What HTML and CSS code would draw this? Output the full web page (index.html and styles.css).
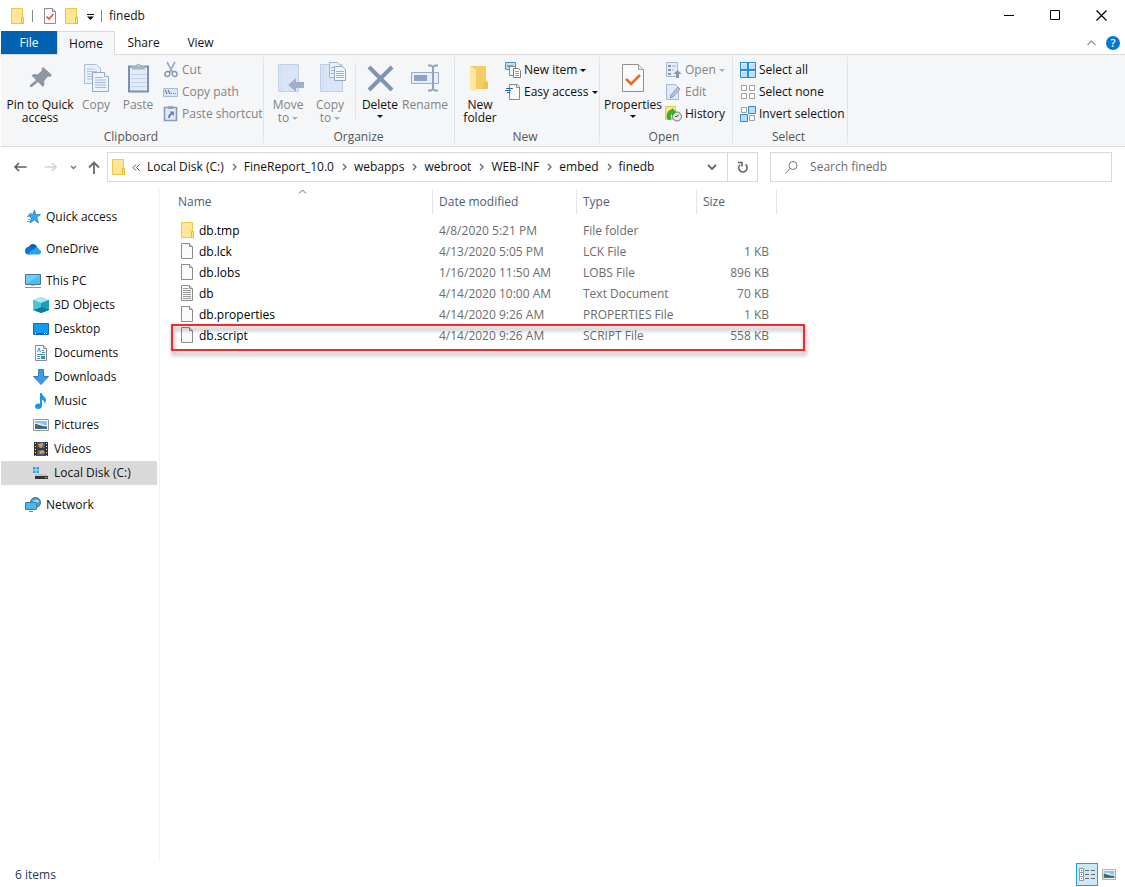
FILE: index.html
```
<!DOCTYPE html>
<html lang="en">
<head>
    <meta charset="UTF-8">
    <meta name="viewport" content="width=device-width, initial-scale=1.0">
    <title>finedb</title>
    <link rel="stylesheet" href="styles.css">
</head>
<body>
    <!-- shared icons -->
    <svg class="sprite" aria-hidden="true">
        <symbol id="i-folder" viewBox="0 0 16 16">
            <path d="M1.5.5h11v9h1v6h-12z" fill="#ffe694" stroke="#efc84a"/>
            <path d="M11.500 15V9.500h2v6h-2z" fill="#ffe694" stroke="#e6b92f"/>
        </symbol>
        <symbol id="i-file" viewBox="0 0 16 16">
            <path d="M2.500.5h8l3 3v12h-11z" fill="#f9fafb" stroke="#8c8c8c"/>
            <path d="M10.500.5v3h3" fill="#e4e4e4" stroke="#8c8c8c"/>
        </symbol>
        <symbol id="i-drop" viewBox="0 0 6 3">
            <path d="M0 0h6L3 3z" fill="currentColor"/>
        </symbol>
        <symbol id="i-next" viewBox="0 0 5 8">
            <path d="M1 1l3 3-3 3" fill="none" stroke="#666" stroke-width="1.300"/>
        </symbol>
        <symbol id="i-picture" viewBox="0 0 16 12">
            <path d="M.5.5h15v11H.5z" fill="#fff" stroke="#969696"/>
            <path d="M2 2h12v8H2z" fill="#8fc3ee"/>
            <path d="M2 4h5l4 2h3v2H2z" fill="#e3eff8"/>
            <path d="M2 5c3 0 5 2 12 2.500V9H2z" fill="#3f6b62"/>
            <path d="M2 9h12v1H2z" fill="#3d6f9e"/>
        </symbol>
    </svg>

    <div class="window">
        <header class="titlebar">
            <svg class="icon" viewBox="0 0 16 16"><use href="#i-folder"/></svg>
            <span class="bar"></span>
            <button class="quick" aria-label="Properties">
                <svg class="icon" viewBox="0 0 16 16"><use href="#i-file"/><path d="M4.500 8.500l2.500 2.500 4.500-5" fill="none" stroke="#e8541c" stroke-width="1.600"/></svg>
            </button>
            <button class="quick" aria-label="New folder">
                <svg class="icon" viewBox="0 0 16 16"><use href="#i-folder"/></svg>
            </button>
            <button class="quick customize" aria-label="Customize Quick Access Toolbar">
                <svg width="7" height="6" viewBox="0 0 7 6"><path d="M0 0h7v1H0zM0 2.500h7L3.500 6z" fill="#111"/></svg>
            </button>
            <span class="bar"></span>
            <h1>finedb</h1>
            <div class="window-controls">
                <button aria-label="Minimize"><svg width="11" height="11"><path d="M0 5.500h10" stroke="#000"/></svg></button>
                <button aria-label="Maximize"><svg width="11" height="11"><path d="M.5.5h9v9h-9z" fill="none" stroke="#000"/></svg></button>
                <button aria-label="Close"><svg width="11" height="11"><path d="M.5.5l10 10M10.500.5l-10 10" stroke="#000" stroke-width="1.200"/></svg></button>
            </div>
        </header>

        <nav class="tabs">
            <button class="tab file">File</button>
            <button class="tab active">Home</button>
            <button class="tab">Share</button>
            <button class="tab">View</button>
            <div class="tab-tools">
                <button aria-label="Minimize the Ribbon"><svg width="9" height="6"><path d="M.5 5l4-4 4 4" fill="none" stroke="#999" stroke-width="1.300"/></svg></button>
                <button class="help" aria-label="Help">?</button>
            </div>
        </nav>

        <div class="ribbon">
            <section class="group clipboard">
                <div class="tools">
                    <button class="big pin">
                        <svg width="32" height="32" viewBox="0 0 32 32"><path d="M19 4l9 8-2 2-2-.5-4 4.500c1 3 0 5-1 6l-5-5-6 5H6v-2l6-5-4.500-4.500C9 11 11 10.500 13.500 11.500L18 7.500 17.500 6z" fill="#8e979f"/></svg>
                        <span>Pin to Quick<br>access</span>
                    </button>
                    <button class="big" disabled>
                        <svg width="32" height="32" viewBox="0 0 32 32">
                            <path d="M4.500 1.500h12l4 4v15h-16z" fill="#eaf0f9" stroke="#a9bdd8"/><path d="M7 6h8M7 8.500h10M7 11h10M7 13.500h10M7 16h10" stroke="#b1c5e0"/>
                            <path d="M12.500 9.500h12l4 4v15h-16z" fill="#eef3fb" stroke="#92a9c9"/><path d="M24.500 9.500v4h4" fill="#fff" stroke="#92a9c9"/><path d="M15 14.500h8M15 17h11M15 19.500h11M15 22h11M15 24.500h11" stroke="#a3b9d8"/>
                        </svg>
                        <span>Copy</span>
                    </button>
                    <button class="big" disabled>
                        <svg width="32" height="32" viewBox="0 0 32 32">
                            <path d="M7 3.500h19v25H7z" fill="#e2ebf8" stroke="#7b8fb0" stroke-width="2"/>
                            <path d="M9 11.500h15M9 15.500h15M9 19.500h15M9 23.500h15" stroke="#c2d1e6"/>
                            <path d="M10 6.500V3h4c0-3 5-3 5 0h4v3.500z" fill="#a5b1c4"/><path d="M16 2h1v1h-1z" fill="#fff"/>
                        </svg>
                        <span>Paste</span>
                    </button>
                    <div class="stack">
                        <button class="small" disabled>
                            <svg class="icon" viewBox="0 0 16 16"><path d="M4 0l5.500 10M12 0L6.500 10" stroke="#9aaccc" stroke-width="1.700"/><path d="M4.500 9.500c2 0 3 1 2 3.500-1 2-4 2-4.500 0-.5-2 1-3.500 2.500-3.500zM11.500 9.500c-2 0-3 1-2 3.500 1 2 4 2 4.500 0 .5-2-1-3.500-2.500-3.500z" fill="none" stroke="#8095b9" stroke-width="1.500"/></svg>
                            Cut
                        </button>
                        <button class="small" disabled>
                            <svg class="icon" viewBox="0 0 16 16"><path d="M.5 4.500h14v8H.5z" fill="#dce7f6" stroke="#a8bbd6"/><path d="M2 6l2 4M5 6l2 4M8 9.500h1M10 9.500h1M12 9.500h1" stroke="#6c7f9f" stroke-width="1.200"/></svg>
                            Copy path
                        </button>
                        <button class="small" disabled>
                            <svg class="icon" viewBox="0 0 16 16"><path d="M1.500 1.500h12v13h-12z" fill="#e2ebf8" stroke="#869ab9" stroke-width="1.600"/><path d="M5 0h5v3H5z" fill="#93a5c2"/><path d="M5 12c0-3 1-4 3-5L6.500 5.500H11V10L9.500 8.500C8 9 7 10 7 12z" fill="#7084a8"/></svg>
                            Paste shortcut
                        </button>
                    </div>
                </div>
                <h2>Clipboard</h2>
            </section>

            <section class="group organize">
                <div class="tools">
                    <button class="big" disabled>
                        <svg width="32" height="32" viewBox="0 0 32 32"><path d="M6.500 1.500h20v27h-20z" fill="#d9e5f6" stroke="#bfd0e8"/><path d="M9 2v26" stroke="#cbdaee"/><path d="M16 22l8-7v4h8v6h-8v4z" fill="#a0b0cc"/></svg>
                        <span>Move to <svg class="drop"><use href="#i-drop"/></svg></span>
                    </button>
                    <button class="big" disabled>
                        <svg width="32" height="32" viewBox="0 0 32 32"><path d="M6.500 1.500h22v27h-22z" fill="#d9e5f6" stroke="#bfd0e8"/><path d="M9 2v26" stroke="#cbdaee"/><path d="M15.500-.5h8l3 3v12h-11z" fill="#eaf1fb" stroke="#a3b5d0"/><path d="M20.500 3.500h8l3 3v11h-11z" fill="#f1f5fc" stroke="#93a7c6"/><path d="M22 8.500h8M22 10.500h8M22 12.500h8M22 14.500h8M17 4.500h3M17 7.500h3M17 10.500h3" stroke="#9fb2d0"/></svg>
                        <span>Copy to <svg class="drop"><use href="#i-drop"/></svg></span>
                    </button>
                    <span class="divider"></span>
                    <button class="big">
                        <svg width="32" height="32" viewBox="0 0 32 32"><path d="M5 4l23 23M28 4L5 27" stroke="#8193b2" stroke-width="4"/></svg>
                        <span>Delete <svg class="drop block"><use href="#i-drop"/></svg></span>
                    </button>
                    <button class="big rename" disabled>
                        <svg width="32" height="32" viewBox="0 0 32 32"><path d="M2.500 9.500h27v11h-27z" fill="#e6eef9" stroke="#98abc8"/><path d="M5 12h13v6H5z" fill="#8fa3c3"/><path d="M19 2.500h3l2 1.500 2-1.500h3M24 3v24M19 27.500h3l2-1.500 2 1.500h3" fill="none" stroke="#8fa3c1" stroke-width="2"/></svg>
                        <span>Rename</span>
                    </button>
                </div>
                <h2>Organize</h2>
            </section>

            <section class="group new">
                <div class="tools">
                    <button class="big">
                        <svg width="32" height="32" viewBox="0 0 32 32"><path d="M6 3h16v14l2 2v7H6z" fill="#f5cd65"/><path d="M6 3l6 4v19.500l-1.500 2L6 26z" fill="#ffe79f"/><path d="M19 19h5v7h-5z" fill="#efc455"/></svg>
                        <span>New folder</span>
                    </button>
                    <div class="stack">
                        <button class="small">
                            <svg class="icon" viewBox="0 0 16 16"><path d="M.5.500h10v7H.5z" fill="#bfe0f5" stroke="#4c91bb"/><path d="M2 4h6" stroke="#32678c"/><path d="M4.500 4.500h6v9h-6z" fill="#f5f5f5" stroke="#8a8a8a"/><path d="M8.500 6.500h5l2 2v7h-7z" fill="#fff" stroke="#7e7e7e"/><path d="M10 9.500h4M10 11.500h4M10 13.500h4" stroke="#e0877f"/></svg>
                            New item <svg class="drop"><use href="#i-drop"/></svg>
                        </button>
                        <button class="small">
                            <svg class="icon" viewBox="0 0 16 16"><path d="M4.500.5h8l2 2v13h-10z" fill="#fafafa" stroke="#8a8a8a"/><path d="M11.500.5v3h3" fill="none" stroke="#8a8a8a"/><path d="M1 4.500h7M0 6.500h6M2 8.500h3" stroke="#2d6aa0"/></svg>
                            Easy access <svg class="drop"><use href="#i-drop"/></svg>
                        </button>
                    </div>
                </div>
                <h2>New</h2>
            </section>

            <section class="group open">
                <div class="tools">
                    <button class="big">
                        <svg width="32" height="32" viewBox="0 0 32 32"><path d="M5.500 1.500h16l5 5v22h-21z" fill="#fafafa" stroke="#909090"/><path d="M21.500 1.500v5h5" fill="#e6e6e6" stroke="#a0a0a0"/><path d="M9 16l5 5 9-9" fill="none" stroke="#f26522" stroke-width="2.500"/></svg>
                        <span>Properties <svg class="drop block"><use href="#i-drop"/></svg></span>
                    </button>
                    <div class="stack">
                        <button class="small" disabled>
                            <svg class="icon" viewBox="0 0 16 16"><path d="M.5.5h11v14H.5z" fill="#e6edf8" stroke="#a8b8d2"/><path d="M2 3h3v2H2zM2 7h3v2H2zM2 11h3v2H2z" fill="#8197bc"/><path d="M6 4h4M6 8h2" stroke="#9eb0ce"/><path d="M10 16v-4H7.500L11.500 8l4 4H13v4z" fill="#8197bc"/></svg>
                            Open <svg class="drop"><use href="#i-drop"/></svg>
                        </button>
                        <button class="small" disabled>
                            <svg class="icon" viewBox="0 0 16 16"><path d="M.5.5h9l3 3v12H.5z" fill="#dfe8f6" stroke="#a8b8d2"/><path d="M4 14l1-3 7-8 2 2-7 8z" fill="#b5c4dd" stroke="#8a9dbf"/></svg>
                            Edit
                        </button>
                        <button class="small">
                            <svg class="icon" viewBox="0 0 16 16"><path d="M-.5.5h10v13h-10z" fill="#ffe48d" stroke="#efc84a"/><circle cx="11" cy="10.500" r="4.500" fill="#e5e5e5" stroke="#777"/><path d="M10.500 11l2-2.500M9 10.500h2" fill="none" stroke="#555"/><path d="M1 11c0-5 2-7 5-7V2.500l4 3.500-4 3V7.500c-1.500 0-2 2-1 5.500C2.500 14 1 13 1 11z" fill="#2fb52e" stroke="#17871b" stroke-width=".5"/></svg>
                            History
                        </button>
                    </div>
                </div>
                <h2>Open</h2>
            </section>

            <section class="group select">
                <div class="tools">
                    <div class="stack">
                        <button class="small">
                            <svg class="icon" viewBox="0 0 16 16"><path d="M.5.500h15v15H.5z" fill="#b8dffa" stroke="#2b8bd8"/><path d="M8 0v16M0 8h16" stroke="#2b8bd8" stroke-width="2"/><path d="M1.500 6.500v-5h5M9.500 6.500v-5h5M1.500 14.500v-5h5M9.500 14.500v-5h5" fill="none" stroke="#e3f3fe"/></svg>
                            Select all
                        </button>
                        <button class="small">
                            <svg class="icon" viewBox="0 0 16 16"><path d="M1.500 1.500h5v5h-5zM9.500 1.500h5v5h-5zM1.500 9.500h5v5h-5zM9.500 9.500h5v5h-5z" fill="#fff" stroke="#a0a0a0"/></svg>
                            Select none
                        </button>
                        <button class="small">
                            <svg class="icon" viewBox="0 0 16 16"><path d="M1.500 1.500h5v5h-5zM9.500 9.500h5v5h-5z" fill="#fff" stroke="#a0a0a0"/><path d="M8.500.5h7v7h-7zM.5 8.500h7v7h-7z" fill="#b8dffa" stroke="#2b8bd8"/></svg>
                            Invert selection
                        </button>
                    </div>
                </div>
                <h2>Select</h2>
            </section>
        </div>

        <div class="location">
            <div class="history-nav">
                <button aria-label="Back"><svg width="13" height="10"><path d="M12.500 5H1M5 1L1 5l4 4" fill="none" stroke="#5c5c5c" stroke-width="1.500"/></svg></button>
                <button aria-label="Forward"><svg width="13" height="10"><path d="M.5 5H12M8 1l4 4-4 4" fill="none" stroke="#d2d2d2" stroke-width="1.500"/></svg></button>
                <button class="recent" aria-label="Recent locations"><svg width="7" height="5"><path d="M1 1l2.500 2.500L6 1" fill="none" stroke="#777" stroke-width="1.400"/></svg></button>
                <button class="up" aria-label="Up"><svg width="12" height="13"><path d="M6 13V1.500M1 6.500l5-5 5 5" fill="none" stroke="#6b6b6b" stroke-width="1.800"/></svg></button>
            </div>
            <div class="address">
                <svg class="icon" viewBox="0 0 16 16"><use href="#i-folder"/></svg>
                <svg class="overflow" viewBox="0 0 8 7"><path d="M4 .5l-3 3 3 3M7.500.5l-3 3 3 3" fill="none" stroke="#555"/></svg>
                <nav class="crumbs">
                    <a href="#">Local Disk (C:)</a><svg><use href="#i-next"/></svg>
                    <a href="#">FineReport_10.0</a><svg><use href="#i-next"/></svg>
                    <a href="#">webapps</a><svg><use href="#i-next"/></svg>
                    <a href="#">webroot</a><svg><use href="#i-next"/></svg>
                    <a href="#">WEB-INF</a><svg><use href="#i-next"/></svg>
                    <a href="#">embed</a><svg><use href="#i-next"/></svg>
                    <a href="#">finedb</a>
                </nav>
                <button class="previous" aria-label="Previous locations"><svg width="10" height="7"><path d="M1 1l4 4 4-4" fill="none" stroke="#666" stroke-width="1.800"/></svg></button>
                <button class="refresh" aria-label="Refresh"><svg width="11" height="12" viewBox="0 0 11 12"><path d="M8.500 3.500a4.200 4.200 0 1 1-5.500.3M1 1.500h4v4" fill="none" stroke="#666" stroke-width="1.600"/></svg></button>
            </div>
            <label class="search">
                <svg width="13" height="13"><circle cx="8" cy="4.500" r="4" fill="none" stroke="#777"/><path d="M5 7.500L.5 12.500" stroke="#777"/></svg>
                <input type="search" placeholder="Search finedb" aria-label="Search finedb">
            </label>
        </div>

        <div class="content">
            <aside class="sidebar">
                <ul>
                    <li><a href="#"><svg class="icon" viewBox="0 0 16 16"><path d="M9.500 1l1.300 4.500H15.500l-3.500 3 1.500 5.500-4-3L5 14l1.300-5L3 6l4.500-.5z" fill="#36a5ea" stroke="#1a7cc4" stroke-width=".7"/><path d="M4 4.500h3M2 7.500h3M3 10.500h2M2 12.500h3" stroke="#58b5ee"/></svg>Quick access</a></li>
                </ul>
                <ul>
                    <li><a href="#"><svg class="icon" viewBox="0 0 16 16"><path d="M3.500 7c1-5 7-5 8.500-1l-2 4z" fill="#0a5fb8"/><path d="M0 10c0-4 4-5 6-3.500l5 3L5 13.500H3C1 13.500 0 12 0 10z" fill="#1274d0"/><path d="M2 13l7-5c2-3 5-2 5 .5 3 .5 2.500 5 0 5H3z" fill="#26a3ea"/></svg>OneDrive</a></li>
                </ul>
                <ul>
                    <li><a href="#"><svg class="icon" viewBox="0 0 16 16"><path d="M.5 1.500h15v10H.5z" fill="#4dbcf8" stroke="#467893"/><path d="M1 2h14L1 11z" fill="#8bd7fd" opacity=".6"/><path d="M0 14.500h16" stroke="#8798a7"/><path d="M6 12h4v1H6z" fill="#b2bdc5"/></svg>This PC</a></li>
                    <li class="child"><a href="#"><svg class="icon" viewBox="0 0 16 16"><path d="M0 3l8-3 8 3v10l-8 3-8-3z" fill="#5fd0dc"/><path d="M0 3l8-3 8 3-8 3z" fill="#a5ebf1"/><path d="M8 6l8-3v10l-8 3z" fill="#1a9db4"/><path d="M0 13l8-3 8 3-8 3z" fill="#0b7f96"/><path d="M0 13l8-3V6L0 3z" fill="#4cc5d4"/></svg>3D Objects</a></li>
                    <li class="child"><a href="#"><svg class="icon" viewBox="0 0 16 16"><path d="M.5 2.500h15v11H.5z" fill="#1499f5" stroke="#0870bd"/><path d="M1 12.500h14" stroke="#075b9b"/><path d="M2 12.500h1M11 12.500h1M13 12.500h1" stroke="#fff"/></svg>Desktop</a></li>
                    <li class="child"><a href="#"><svg class="icon" viewBox="0 0 16 16"><use href="#i-file"/><path d="M4.500 7l1.500-4 1.500 4M9 5.500h2M9 7.500h3M4 9.500h8M4 11.500h3M4 13.500h3" fill="none" stroke="#3c91cf"/><path d="M8 11h4v3H8z" fill="#4d879e"/></svg>Documents</a></li>
                    <li class="child"><a href="#"><svg class="icon" viewBox="0 0 16 16"><path d="M5.500.5h5v7h5L8 15.500.5 7.500h5z" fill="#3c9ae8" stroke="#2d7fcb"/></svg>Downloads</a></li>
                    <li class="child"><a href="#"><svg class="icon" viewBox="0 0 16 16"><path d="M7 0h2c0 3 4 4 4 7 0 2-1 3-1.500 4 0-3-1-4-2.500-4v6c0 4-7 4-7 .5C2 11 5 10 7 11z" fill="#139be8"/></svg>Music</a></li>
                    <li class="child"><a href="#"><svg class="icon" viewBox="0 0 16 12"><use href="#i-picture"/></svg>Pictures</a></li>
                    <li class="child"><a href="#"><svg class="icon" viewBox="0 0 16 16"><path d="M1 1h14v14H1z" fill="#333"/><path d="M4 1h8v14H4z" fill="#35558d"/><path d="M5 3l5-1 1 4-4 1zM6 10l4-1 2 3-5 1z" fill="#d1a32f"/><path d="M9 4h2v2H9zM5 11h2v2H5z" fill="#c8493b"/><path d="M4 8h8" stroke="#222"/><path d="M2.500 2v13M13.500 2v13" stroke="#ddd" stroke-dasharray="1 2"/></svg>Videos</a></li>
                    <li class="child selected"><a href="#"><svg class="icon" viewBox="0 0 16 16"><path d="M0 2h2.500v2.500H0zM3.500 2H6v2.500H3.500zM0 5.500h2.500V8H0zM3.500 5.500H6V8H3.500z" fill="#12aeea"/><path d="M3 9h10l2 2H2z" fill="#c4c4c4"/><path d="M2 11h13v3H2z" fill="#343434"/><path d="M12 12.500h2" stroke="#5bdb76"/></svg>Local Disk (C:)</a></li>
                </ul>
                <ul>
                    <li><a href="#"><svg class="icon" viewBox="0 0 16 16"><circle cx="10.500" cy="5.500" r="5" fill="#4e9bc9" stroke="#3a6b91"/><path d="M7 3c3 2 4-2 7 1l-3 4z" fill="#add6ea"/><path d="M.5 5.500h11v7H.5z" fill="#4bb8f2" stroke="#397fa7"/><path d="M4 14.500h4" stroke="#6e91a8"/></svg>Network</a></li>
                </ul>
            </aside>

            <main class="files">
                <div class="listing">
                    <table>
                        <colgroup><col class="col-name"><col class="col-date"><col class="col-type"><col class="col-size"></colgroup>
                        <thead>
                            <tr>
                                <th>Name<svg class="sort" width="9" height="5"><path d="M1 4.500L4.500 1 8 4.500" fill="none" stroke="#666"/></svg></th>
                                <th>Date modified</th><th>Type</th><th>Size</th>
                            </tr>
                        </thead>
                        <tbody>
                            <tr><td><svg class="icon" viewBox="0 0 16 16"><use href="#i-folder"/></svg>db.tmp</td><td>4/8/2020 5:21 PM</td><td>File folder</td><td></td></tr>
                            <tr><td><svg class="icon" viewBox="1 0 16 16"><use href="#i-file" width="16" height="16"/></svg>db.lck</td><td>4/13/2020 5:05 PM</td><td>LCK File</td><td>1 KB</td></tr>
                            <tr><td><svg class="icon" viewBox="1 0 16 16"><use href="#i-file" width="16" height="16"/></svg>db.lobs</td><td>1/16/2020 11:50 AM</td><td>LOBS File</td><td>896 KB</td></tr>
                            <tr><td><svg class="icon" viewBox="1 0 16 16"><use href="#i-file" width="16" height="16"/><path d="M4 3.500h5M4 5.500h8M4 7.500h8M4 9.500h8M4 11.500h8M4 13.500h8" stroke="#999"/></svg>db</td><td>4/14/2020 10:00 AM</td><td>Text Document</td><td>70 KB</td></tr>
                            <tr><td><svg class="icon" viewBox="1 0 16 16"><use href="#i-file" width="16" height="16"/></svg>db.properties</td><td>4/14/2020 9:26 AM</td><td>PROPERTIES File</td><td>1 KB</td></tr>
                            <tr><td><svg class="icon" viewBox="1 0 16 16"><use href="#i-file" width="16" height="16"/></svg>db.script</td><td>4/14/2020 9:26 AM</td><td>SCRIPT File</td><td>558 KB</td></tr>
                        </tbody>
                    </table>
                    <div class="callout"></div>
                </div>
            </main>
        </div>

        <footer class="statusbar">
            <span>6 items</span>
            <div class="views">
                <button class="view current" aria-label="Details view"><svg width="16" height="14"><path d="M.5.5h4v12h-4zM.5 4.500h4M.5 8.500h4" fill="#fff" stroke="#999"/><path d="M2 2.500h1M2 6.500h1M2 10.500h1" stroke="#a33"/><path d="M6 2.500h4M12 2.500h4M6 6.500h4M12 6.500h4M6 10.500h4M12 10.500h4" stroke="#6a6a6a"/></svg></button>
                <button class="view" aria-label="Large icons view"><svg width="14" height="11"><use href="#i-picture"/></svg></button>
            </div>
        </footer>
    </div>
</body>
</html>
```
FILE: styles.css
```
* {
    box-sizing: border-box;
}
body {
    margin: 0;
    font-family: "Open Sans", sans-serif;
    font-size: 12px;
    line-height: 16px;
    color: #111;
    background-color: #fff;
}
button {
    margin: 0;
    padding: 0;
    border: 0;
    background: none;
    font: inherit;
    color: inherit;
}
a {
    color: inherit;
    text-decoration: none;
}
h1, h2 {
    margin: 0;
    font-size: inherit;
    font-weight: 400;
}
ul {
    margin: 0;
    padding: 0;
    list-style: none;
}
svg {
    flex: none;
    overflow: visible;
}
.sprite {
    position: absolute;
    width: 0;
    height: 0;
}
.icon {
    width: 16px;
    height: 16px;
}
.drop {
    width: 6px;
    height: 3px;
    vertical-align: middle;
}
.window {
    display: flex;
    flex-direction: column;
    min-height: 100vh;
    padding-left: 1px;
}

/* title bar */
.titlebar {
    display: flex;
    align-items: center;
    height: 31px;
    padding-left: 9px;
}
.bar {
    width: 1px;
    height: 12px;
    margin: 0 8px 0 6px;
    background-color: #888;
}
.quick {
    display: flex;
    margin-right: 6px;
}
.quick:first-of-type {
    margin-left: 1px;
}
.customize {
    margin: 2px 1px 0 1px;
}
.titlebar h1 {
    margin-left: -1px;
}
.window-controls {
    display: flex;
    margin-left: auto;
    padding-right: 1px;
}
.window-controls button {
    display: flex;
    align-items: center;
    justify-content: center;
    width: 46px;
    height: 31px;
}

/* tabs */
.tabs {
    display: flex;
    height: 24px;
    border-bottom: 1px solid #dadbdc;
}
.tab {
    width: 56px;
    height: 23px;
}
.tab + .tab {
    width: 57px;
}
.tab.file {
    background-color: #0063b1;
    color: #fff;
}
.tab.active {
    width: 58px;
    height: 24px;
    border: 1px solid #dadbdc;
    border-bottom: 0;
    background-color: #f5f6f7;
}
.tab-tools {
    display: flex;
    align-items: center;
    gap: 10px;
    margin-left: auto;
    padding-right: 5px;
}
.tab-tools button {
    display: flex;
    align-items: center;
    justify-content: center;
}
.tab-tools .help {
    width: 14px;
    height: 14px;
    border-radius: 50%;
    background-color: #0078d7;
    color: #fff;
    font-size: 11px;
    font-weight: 600;
}

/* ribbon */
.ribbon {
    display: flex;
    height: 92px;
    border-bottom: 1px solid #dadbdc;
    background-color: #f5f6f7;
}
.group {
    display: flex;
    flex-direction: column;
    justify-content: space-between;
    margin: 2px 0 3px;
    padding: 2px 4px 0;
    border-right: 1px solid #e2e3e4;
}
.group h2 {
    line-height: 12px;
    text-align: center;
    color: #555;
}
.clipboard {
    width: 263px;
    padding-right: 6px;
}
.organize {
    width: 191px;
    padding-left: 3px;
}
.new {
    width: 145px;
    padding-right: 8px;
}
.open {
    width: 133px;
    padding-right: 8px;
}
.select {
    width: 115px;
    padding: 2px 10px 0 7px;
}
.tools {
    display: flex;
}
.big {
    display: flex;
    flex: none;
    flex-direction: column;
    align-items: center;
    width: 42px;
    padding-top: 4px;
    line-height: 13px;
}
.big span {
    margin-top: 3px;
}
.big.pin {
    width: 70px;
    white-space: nowrap;
}
.big.rename {
    width: 48px;
}
.open .big {
    width: 58px;
}
.big .block {
    display: block;
    margin: 4px auto 0;
}
.divider {
    width: 1px;
    height: 56px;
    margin: 4px 3px 0 4px;
    background-color: #e2e3e4;
}
.stack {
    display: flex;
    flex-direction: column;
    padding-left: 4px;
}
.select .stack {
    padding-left: 0;
}
.small {
    display: flex;
    align-items: center;
    gap: 3px;
    height: 22px;
    white-space: nowrap;
}
button:disabled {
    color: #838383;
}
button:disabled .drop {
    color: #b0b0b0;
}

/* address row */
.location {
    display: flex;
    align-items: center;
    gap: 12px;
    padding: 5px 13px 0 0;
}
.history-nav {
    display: flex;
    align-items: center;
    width: 94px;
    padding-left: 13px;
}
.history-nav button {
    display: flex;
    margin-right: 17px;
}
.history-nav .recent {
    margin: 0 11px 0 -4px;
}
.history-nav .up {
    margin: 0;
}
.address {
    display: flex;
    flex: 29 1 0;
    align-items: center;
    height: 30px;
    padding-left: 3px;
    border: 1px solid #d9d9d9;
}
.overflow {
    width: 8px;
    height: 7px;
    margin: 0 7px 0 5px;
}
.crumbs {
    display: flex;
    flex: 1;
    align-items: center;
    white-space: nowrap;
}
.crumbs svg {
    width: 5px;
    height: 8px;
    margin: 0 7px 0 8px;
}
.address button {
    display: flex;
    align-items: center;
    justify-content: center;
    width: 30px;
    height: 28px;
}
.address .refresh {
    border-left: 1px solid #d9d9d9;
}
.search {
    display: flex;
    flex: 14 1 0;
    align-items: center;
    gap: 12px;
    height: 30px;
    padding: 0 14px;
    border: 1px solid #d9d9d9;
}
.search input {
    flex: 1;
    min-width: 0;
    padding: 0;
    border: 0;
    outline: 0;
    font: inherit;
}
.search input::placeholder {
    color: #6d6d6d;
}

/* navigation pane */
.content {
    display: flex;
    flex: 1;
    padding-top: 7px;
}
.sidebar {
    flex: none;
    width: 159px;
    padding: 16px 2px 0 0;
    border-right: 1px solid #f2f2f2;
}
.sidebar ul + ul {
    margin-top: 8px;
}
.sidebar a {
    display: flex;
    align-items: center;
    gap: 5px;
    height: 24px;
    padding-left: 24px;
}
.sidebar .child a {
    padding-left: 32px;
}
.sidebar .selected {
    background-color: #d9d9d9;
}

/* file list */
.files {
    flex: 1;
    padding-left: 12px;
}
.listing {
    position: relative;
    width: 633px;
}
.listing table {
    width: 605px;
    table-layout: fixed;
    border-collapse: separate;
    border-spacing: 0;
}
.col-name {
    width: 261px;
}
.col-date {
    width: 144px;
}
.col-type {
    width: 120px;
}
.listing th {
    position: relative;
    height: 25px;
    padding: 0 6px;
    border-right: 1px solid #e5e5e5;
    font-weight: 400;
    text-align: left;
    color: #4c607a;
}
.listing tbody::before {
    content: "";
    display: block;
    height: 6px;
}
.sort {
    position: absolute;
    top: 0;
    left: 126px;
}
.listing td {
    height: 21px;
    padding: 0 6px;
    color: #6d6d6d;
    white-space: nowrap;
}
.listing td:first-child {
    padding-left: 8px;
    color: #000;
}
.listing td:last-child {
    padding-right: 8px;
    text-align: right;
}
.listing td .icon {
    margin-right: 3px;
    vertical-align: -3px;
}
.callout {
    position: absolute;
    right: 0;
    bottom: -5px;
    left: -1px;
    height: 27px;
    border: 2px solid #f5282d;
    filter: drop-shadow(1px 4px 2px rgba(0, 0, 0, 0.4));
}

/* status bar */
.statusbar {
    display: flex;
    align-items: center;
    justify-content: space-between;
    height: 25px;
    padding: 0 7px 0 14px;
    color: #1e395b;
}
.views {
    display: flex;
    align-items: center;
    gap: 2px;
}
.view {
    display: flex;
    align-items: center;
    justify-content: center;
    width: 18px;
    height: 23px;
}
.view.current {
    width: 22px;
    border: 1px solid #26a0da;
    background-color: #cbe8f6;
}
```
